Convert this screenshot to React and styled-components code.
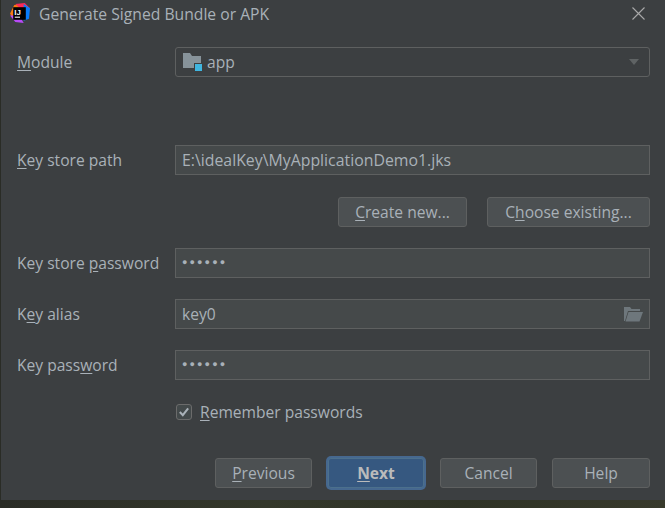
import React from 'react'
import styled, { createGlobalStyle } from 'styled-components'

const GlobalStyle = createGlobalStyle`
  html, body {
    margin: 0;
    padding: 0;
    background: linear-gradient(90deg, #2a2c26 0%, #34382b 40%, #2f3326 70%, #383a2c 100%);
  }
`;

const Dialog = styled.div`
  width: 664px;
  height: 500px;
  margin-left: 1px;
  background: #3c3f41;
  font-family: "Open Sans", sans-serif;
  font-size: 15.6px;
  color: #a9b1b8;
  display: flex;
  flex-direction: column;
  box-sizing: border-box;
`;

const TitleBar = styled.div`
  flex: none;
  height: 27px;
  display: flex;
  align-items: center;
  padding: 0 20px 0 8px;
  gap: 9px;
`;

const Title = styled.div`
  flex: 1;
  font-size: 15.7px;
`;

const Form = styled.div`
  flex: 1;
  padding: 20px 15px 14px 16px;
  display: flex;
  flex-direction: column;
`;

const Row = styled.div`
  display: grid;
  grid-template-columns: 158px 1fr;
  align-items: center;
  height: 30px;
  margin-top: ${p => p.$top || 0}px;
`;

const Label = styled.div`
  white-space: nowrap;
`;

const Key = styled.span`
  text-decoration: underline;
  text-underline-offset: 2px;
`;

const Field = styled.div`
  height: 30px;
  box-sizing: border-box;
  border: 1px solid #5e6060;
  background: #45494a;
  padding: 0 6px;
  display: flex;
  align-items: center;
  justify-content: space-between;
`;

const PathValue = styled.span`
  font-size: 15.85px;
`;

const Combo = styled(Field)`
  background: #3c3f41;
  border-radius: 3px;
  padding: 0 10px 0 7px;
`;

const Dots = styled.span`
  font-size: 9px;
  letter-spacing: 2.1px;
  position: relative;
  top: -2px;
`;

const ComboValue = styled.div`
  display: flex;
  align-items: center;
  gap: 5px;
`;

const Caret = styled.div`
  width: 0;
  height: 0;
  border-left: 5px solid transparent;
  border-right: 5px solid transparent;
  border-top: 6px solid #5f6364;
`;

const ButtonRow = styled.div`
  display: flex;
  justify-content: flex-end;
  gap: ${p => p.$gap || 20}px;
  margin-top: ${p => p.$top || 0}px;
`;

const Button = styled.div`
  height: 30px;
  width: ${p => p.$w}px;
  box-sizing: border-box;
  border: 1px solid #5e6060;
  border-radius: 3px;
  background: #4c5052;
  display: flex;
  align-items: center;
  justify-content: center;
`;

const PrimaryButton = styled(Button)`
  background: #365880;
  border-color: #4c708c;
  color: #bbbbbb;
  font-weight: 700;
  box-shadow: 0 0 0 2px #46688f;
  margin: 0 1px;
`;

const CheckRow = styled.div`
  display: flex;
  align-items: center;
  gap: 8px;
  margin-top: 21px;
  margin-left: 159px;
`;

const Box = styled.div`
  width: 16px;
  height: 16px;
  box-sizing: border-box;
  border: 1px solid #6b6b6b;
  border-radius: 3px;
  background: #43494a;
  display: flex;
  align-items: center;
  justify-content: center;
`;

const LogoIcon = () => (
  <svg width="21" height="21" viewBox="0 0 20 20">
    <path d="M1 10 L5 2 L12 1 L9 10 L3 14 Z" fill="#f97a12" />
    <path d="M6 1 L15 0 L20 5 L14 8 Z" fill="#fe2857" />
    <path d="M14 1 L20 5 L19 15 L14 17 Z" fill="#087cfa" />
    <path d="M1 12 L6 18 L14 19 L10 12 Z" fill="#b74af7" />
    <rect x="4" y="4" width="12" height="12" fill="#000" />
    <rect x="5.5" y="13" width="5" height="1" fill="#fff" />
    <text x="5" y="11" fontSize="7.5" fontWeight="700" fontFamily="Liberation Sans" fill="#fff">IJ</text>
  </svg>
)

const CloseIcon = () => (
  <svg width="13" height="13" viewBox="0 0 13 13">
    <path d="M0.5 0.5 L12.5 12.5 M12.5 0.5 L0.5 12.5" stroke="#a9a9a9" strokeWidth="1.1" />
  </svg>
)

const ModuleIcon = () => (
  <svg width="19" height="18" viewBox="0 0 19 18">
    <path d="M0 0 H7 L9 3 H18 V15 H0 Z" fill="#87939a" />
    <rect x="11" y="10" width="8" height="8" fill="#3d3f41" />
    <rect x="12" y="11" width="7" height="7" fill="#40b6e0" />
  </svg>
)

const FolderIcon = () => (
  <svg width="19" height="15" viewBox="0 0 19 15">
    <path d="M0 0 H6 L7.5 2 H16 V4 H4 L1 14 H0 Z" fill="#6e777c" />
    <path d="M4.5 5 H19 L15.5 14.5 H1.5 Z" fill="#6e777c" />
  </svg>
)

const CheckIcon = () => (
  <svg width="12" height="12" viewBox="0 0 13 13">
    <path d="M2 6.5 L5.2 10 L11 2.5" fill="none" stroke="#a9b1b8" strokeWidth="2.2" />
  </svg>
)

const App = () => {
  return (
    <>
      <GlobalStyle />
      <Dialog>
        <TitleBar>
          <LogoIcon />
          <Title>Generate Signed Bundle or APK</Title>
          <CloseIcon />
        </TitleBar>
        <Form>
          <Row>
            <Label><Key>M</Key>odule</Label>
            <Combo>
              <ComboValue><ModuleIcon />app</ComboValue>
              <Caret />
            </Combo>
          </Row>
          <Row $top={68}>
            <Label><Key>K</Key>ey store path</Label>
            <Field><PathValue>E:\idealKey\MyApplicationDemo1.jks</PathValue></Field>
          </Row>
          <ButtonRow $top={22}>
            <Button $w={129}><span><Key>C</Key>reate new...</span></Button>
            <Button $w={163}><span>C<Key>h</Key>oose existing...</span></Button>
          </ButtonRow>
          <Row $top={21}>
            <Label>Key store <Key>p</Key>assword</Label>
            <Field><Dots>●●●●●●</Dots></Field>
          </Row>
          <Row $top={21}>
            <Label>K<Key>e</Key>y alias</Label>
            <Field>key0<FolderIcon /></Field>
          </Row>
          <Row $top={21}>
            <Label>Key pass<Key>w</Key>ord</Label>
            <Field><Dots>●●●●●●</Dots></Field>
          </Row>
          <CheckRow>
            <Box><CheckIcon /></Box>
            <span><Key>R</Key>emember passwords</span>
          </CheckRow>
          <ButtonRow $top={35} $gap={15}>
            <Button $w={97}><span><Key>P</Key>revious</span></Button>
            <PrimaryButton $w={96}><span><Key>N</Key>ext</span></PrimaryButton>
            <Button $w={97}>Cancel</Button>
            <Button $w={98}>Help</Button>
          </ButtonRow>
        </Form>
      </Dialog>
    </>
  )
}

export default App
